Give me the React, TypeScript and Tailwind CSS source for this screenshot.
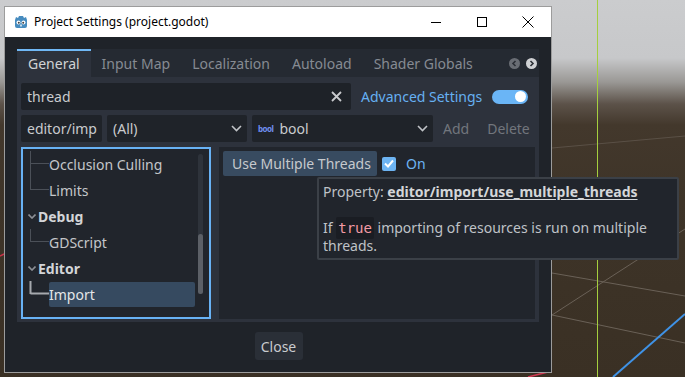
import React from 'react'

const ui = { fontFamily: '"Noto Sans", "Open Sans", sans-serif' }

function GodotIcon() {
  return (
    <svg width="16" height="16" viewBox="0 0 16 16">
      <path d="M2 6 L3 3 L5 4 L6 2 L10 2 L11 4 L13 3 L14 6 L14 12 Q14 14 12 14 L4 14 Q2 14 2 12 Z" fill="#478cbf" />
      <circle cx="5.5" cy="8.5" r="2" fill="#fff" />
      <circle cx="10.5" cy="8.5" r="2" fill="#fff" />
      <circle cx="5.8" cy="8.7" r="1" fill="#414042" />
      <circle cx="10.2" cy="8.7" r="1" fill="#414042" />
      <rect x="7.3" y="10.5" width="1.4" height="2" fill="#fff" />
    </svg>
  )
}

function Chevron({ color = '#c0c3c7' }: { color?: string }) {
  return (
    <svg width="11" height="7" viewBox="0 0 11 7">
      <path d="M1 1 L5.5 5.5 L10 1" stroke={color} strokeWidth="1.6" fill="none" />
    </svg>
  )
}

function TreeChild({ label, full, selected }: { label: string; full?: boolean; selected?: boolean }) {
  const c = selected ? '#a6a9ae' : '#4b5058'
  const w = selected ? 2 : 1
  return (
    <div className="flex h-[26px] items-center">
      <svg width="26" height="26" viewBox="0 0 26 26" className="shrink-0">
        <path d={`M7.5 0 L7.5 ${full ? 26 : 13} M7.5 12.5 L26 12.5`} stroke={c} strokeWidth={w} fill="none" />
      </svg>
      <div
        className={
          'flex h-[25px] flex-1 items-center text-[14px] ' +
          (selected ? 'rounded-[2px] bg-[#364a60] text-[#e4e6e8]' : 'text-[#c4c6c9]')
        }
      >
        {label}
      </div>
    </div>
  )
}

function TreeSection({ label }: { label: string }) {
  return (
    <div className="flex h-[26px] items-center pl-[5px]">
      <svg width="8" height="5" viewBox="0 0 8 5" className="mr-[2px]">
        <path d="M0.5 0.5 L4 4 L7.5 0.5" stroke="#8d9096" strokeWidth="1.6" fill="none" />
      </svg>
      <span className="text-[14px] font-bold text-[#d3d5d8]">{label}</span>
    </div>
  )
}

export default function App() {
  const tabs = ['Input Map', 'Localization', 'Autoload', 'Shader Globals']
  return (
    <div
      className="relative h-[377px] w-[685px] overflow-hidden bg-[linear-gradient(180deg,#cbccce_0px,#c7c8ca_58px,#9a9895_82px,#5c5249_104px,#43382c_125px,#3e3428_200px,#3a3024_377px)]"
      style={ui}
    >
      <svg className="absolute inset-0" width="685" height="377">
        <path d="M552 148 L685 136" stroke="#5a5046" strokeWidth="1" />
        <path d="M552 273 L685 296" stroke="#6a6157" strokeWidth="1" />
        <path d="M552 315 L685 229" stroke="#6a6157" strokeWidth="1" />
        <path d="M552 315 L685 343" stroke="#6a6157" strokeWidth="1" />
        <path d="M0 256 L4 254" stroke="#c8324a" strokeWidth="1.5" />
        <path d="M528 377 L552 371" stroke="#d43a55" strokeWidth="1.5" />
        <path d="M597.5 0 L597.5 377" stroke="#a5cf3e" strokeWidth="1" />
        <path d="M613 377 L685 314" stroke="#3f92e6" strokeWidth="2" />
      </svg>

      <div className="absolute left-[4px] top-[6px] flex h-[367px] w-[548px] flex-col border border-[#9c9c9c] bg-[#1f2329]">
        {/* title bar */}
        <div className="flex h-[30px] shrink-0 items-center bg-white">
          <div className="ml-[8px]">
            <GodotIcon />
          </div>
          <span className="ml-[5px] text-[12px] text-black" style={{ fontFamily: '"Noto Sans", sans-serif' }}>
            Project Settings (project.godot)
          </span>
          <div className="ml-auto flex h-full">
            <div className="flex w-[46px] items-center justify-center">
              <div className="h-px w-[10px] bg-black" />
            </div>
            <div className="flex w-[46px] items-center justify-center">
              <div className="h-[10px] w-[10px] border border-black" />
            </div>
            <div className="flex w-[46px] items-center justify-center">
              <svg width="12" height="12" viewBox="0 0 12 12">
                <path d="M0.5 0.5 L11.5 11.5 M11.5 0.5 L0.5 11.5" stroke="#000" strokeWidth="1" />
              </svg>
            </div>
          </div>
        </div>

        {/* body */}
        <div className="flex flex-1 flex-col px-[12px] pt-[12px]">
          {/* tab bar */}
          <div className="flex h-[28px] items-stretch bg-[#252a32] text-[14px]">
            <div className="flex items-center border-t-2 border-[#70b8f5] bg-[#2d323c] px-[11px] pb-[2px] text-[#d0d2d5]">
              General
            </div>
            {tabs.map((t) => (
              <div key={t} className="flex items-center px-[11px] text-[#868b93]">
                {t}
              </div>
            ))}
            <div className="ml-auto mr-[2px] flex items-center gap-[6px]">
              <svg width="11" height="11" viewBox="0 0 11 11">
                <circle cx="5.5" cy="5.5" r="5.5" fill="#696d74" />
                <path d="M6.5 3 L4 5.5 L6.5 8" stroke="#2b2f36" strokeWidth="1.6" fill="none" />
              </svg>
              <svg width="11" height="11" viewBox="0 0 11 11">
                <circle cx="5.5" cy="5.5" r="5.5" fill="#cfd1d4" />
                <path d="M4.5 3 L7 5.5 L4.5 8" stroke="#2b2f36" strokeWidth="1.6" fill="none" />
              </svg>
            </div>
          </div>

          {/* panel */}
          <div className="flex h-[245px] flex-col bg-[#2d323c] px-[4px] pb-[3px] pt-[6px]">
            {/* search row */}
            <div className="flex h-[27px] items-center">
              <div className="flex h-full w-[330px] items-center rounded-[2px] bg-[#1e2228] pl-[6px] pr-[9px] text-[14px] text-[#c9cbce]">
                thread
                <svg width="11" height="11" viewBox="0 0 11 11" className="ml-auto">
                  <path d="M1 1 L10 10 M10 1 L1 10" stroke="#c8cacd" strokeWidth="1.8" />
                </svg>
              </div>
              <span className="ml-[10px] text-[14px] text-[#66b0f2]">Advanced Settings</span>
              <div className="ml-[10px] flex h-[14px] w-[36px] items-center justify-end rounded-full bg-[#6ab5f6] pr-[2px]">
                <div className="h-[11px] w-[11px] rounded-full bg-white" />
              </div>
            </div>

            {/* filter row */}
            <div className="mt-[5px] flex h-[27px] items-stretch text-[14px]">
              <div className="flex w-[81px] items-center rounded-[2px] bg-[#1f2329] pl-[6px] text-[#c9cbce]">
                editor/imp
              </div>
              <div className="ml-[5px] flex w-[140px] items-center rounded-[2px] bg-[#1f2329] pl-[6px] pr-[5px] text-[#c9cbce]">
                (All)
                <span className="ml-auto">
                  <Chevron />
                </span>
              </div>
              <div className="ml-[5px] flex w-[181px] items-center rounded-[2px] bg-[#1f2329] pl-[6px] pr-[5px] text-[#c9cbce]">
                <span className="mr-[6px] text-[8px] font-bold tracking-[-0.5px] text-[#6f8ff2]">bool</span>
                bool
                <span className="ml-auto">
                  <Chevron />
                </span>
              </div>
              <span className="ml-[10px] flex items-center text-[#72767d]">Add</span>
              <span className="ml-[18px] flex items-center text-[#72767d]">Delete</span>
            </div>

            {/* main split */}
            <div className="mt-[5px] flex flex-1 items-stretch">
              {/* tree */}
              <div className="flex w-[190px] border-2 border-[#68b2f5] bg-[#21252c]">
                <div className="flex flex-1 flex-col pt-[2px]">
                  <TreeChild label="Occlusion Culling" full />
                  <TreeChild label="Limits" />
                  <TreeSection label="Debug" />
                  <TreeChild label="GDScript" />
                  <TreeSection label="Editor" />
                  <TreeChild label="Import" selected />
                </div>
                <div className="ml-[3px] mr-[6px] mt-[5px] flex h-[140px] w-[5px] flex-col justify-end rounded-full bg-[#2e333b]">
                  <div className="h-[60px] w-full rounded-full bg-[#5c6067]" />
                </div>
              </div>

              {/* inspector */}
              <div className="ml-[8px] flex-1 bg-[#21252c] p-[4px]">
                <div className="flex h-[25px] items-center">
                  <div className="flex h-full w-[154px] items-center rounded-[2px] bg-[#384b60] pl-[9px] text-[14px] text-[#c6c9cd]">
                    Use Multiple Threads
                  </div>
                  <div className="ml-[5px] flex h-[14px] w-[14px] items-center justify-center rounded-[2px] bg-[#6db4f3]">
                    <svg width="10" height="9" viewBox="0 0 10 9">
                      <path d="M1 4.5 L4 7.5 L9 1.5" stroke="#fff" strokeWidth="2" fill="none" />
                    </svg>
                  </div>
                  <span className="ml-[10px] text-[14px] text-[#6db4f3]">On</span>
                </div>
              </div>
            </div>
          </div>

          {/* footer */}
          <div className="flex justify-center pt-[10px]">
            <div className="ml-[1px] flex h-[28px] w-[48px] items-center justify-center rounded-[3px] bg-[#2a2f37] text-[14px] text-[#c9cbce]">
              Close
            </div>
          </div>
        </div>
      </div>

      {/* tooltip */}
      <div className="absolute left-[317px] top-[177px] h-[83px] w-[362px] rounded-[2px] border-2 border-[#3b4047] bg-[#21252c] px-[4px] pt-[4px] text-[14px] leading-[18px] text-[#bfc2c7]">
        <div className="h-[18px]">
          Property:{' '}
          <span className="font-bold text-[#d4d6d9] underline underline-offset-2">editor/import/use_multiple_threads</span>
        </div>
        <div className="h-[18px]" />
        <div className="h-[18px]">
          If{' '}
          <span
            className="rounded-[2px] bg-[#1a1d23] px-[2px] py-[3px] leading-[18px] text-[#f29aa5]"
            style={{ fontFamily: '"DejaVu Sans Mono", monospace' }}
          >
            true
          </span>{' '}
          importing of resources is run on multiple
        </div>
        <div className="h-[18px]">threads.</div>
      </div>
    </div>
  )
}
